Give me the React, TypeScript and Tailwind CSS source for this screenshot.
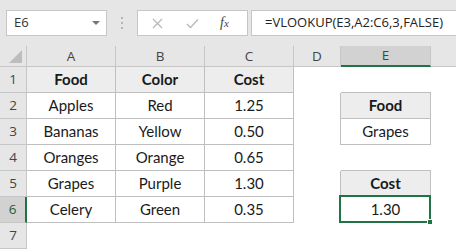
import React from 'react';

const cols = [
  { key: 'A', w: 'w-[89px]' },
  { key: 'B', w: 'w-[89px]' },
  { key: 'C', w: 'w-[89px]' },
  { key: 'D', w: 'w-[47px]' },
  { key: 'E', w: 'w-[90px]' },
];

const data = [
  ['Food', 'Color', 'Cost'],
  ['Apples', 'Red', '1.25'],
  ['Bananas', 'Yellow', '0.50'],
  ['Oranges', 'Orange', '0.65'],
  ['Grapes', 'Purple', '1.30'],
  ['Celery', 'Green', '0.35'],
];

const lookup: Record<number, { text: string; head?: boolean }> = {
  2: { text: 'Food', head: true },
  3: { text: 'Grapes' },
  5: { text: 'Cost', head: true },
  6: { text: '1.30' },
};

const cellFont = "font-['Lato','Liberation_Sans',sans-serif] text-[15px] text-[#1a1a1a]";
const uiFont = "font-['Open_Sans','Liberation_Sans',sans-serif]";

export default function App() {
  const rows = [1, 2, 3, 4, 5, 6, 7];

  return (
    <div className="w-[456px] h-[249px] overflow-hidden bg-white">
      {/* formula bar */}
      <div className="h-[46px] bg-[#e6e6e6] flex items-center pl-[6px]">
        <div className={`w-[101px] h-[26px] bg-white border border-[#c6c6c6] flex items-center justify-between pl-[7px] pr-[6px] ${uiFont} text-[13px] text-[#333]`}>
          <span>E6</span>
          <span className="w-0 h-0 border-l-[4px] border-r-[4px] border-t-[4px] border-l-transparent border-r-transparent border-t-[#777]" />
        </div>
        <div className="w-[30px] flex flex-col items-center gap-[3px]">
          <span className="w-[2px] h-[2px] bg-[#b5b5b5]" />
          <span className="w-[2px] h-[2px] bg-[#b5b5b5]" />
          <span className="w-[2px] h-[2px] bg-[#b5b5b5]" />
        </div>
        <div className="w-[111px] h-[26px] bg-white border border-[#c6c6c6] flex items-center pl-[12px]">
          <svg width="11" height="11" viewBox="0 0 11 11" className="ml-[2px]">
            <path d="M1 1L10 10M10 1L1 10" stroke="#b8b8b8" strokeWidth="1.3" />
          </svg>
          <svg width="13" height="11" viewBox="0 0 13 11" className="ml-[23px]">
            <path d="M1 6L4.5 9.5L12 1.5" stroke="#b8b8b8" strokeWidth="1.3" fill="none" />
          </svg>
          <span className="ml-[21px] font-['Liberation_Serif',serif] italic text-[14px] text-[#444] leading-none">
            f<span className="text-[11px]">x</span>
          </span>
        </div>
        <div className={`ml-[3px] flex-1 h-[26px] bg-white border border-[#c6c6c6] border-r-0 flex items-center pl-[13px] ${uiFont} text-[13px] text-[#222]`}>
          =VLOOKUP(E3,A2:C6,3,FALSE)
        </div>
      </div>

      {/* column headers */}
      <div className={`flex h-[21px] bg-[#e6e6e6] ${uiFont} text-[13.5px] text-[#444]`}>
        <div className="w-[27px] border-r border-b border-[#c6c6c6] relative">
          <svg width="13" height="13" viewBox="0 0 13 13" className="absolute right-[4px] bottom-[3px]">
            <path d="M13 0V13H0Z" fill="#bdbdbd" />
          </svg>
        </div>
        {cols.map((c) =>
          c.key === 'E' ? (
            <div key={c.key} className={`${c.w} border-r border-[#c6c6c6] border-b-2 border-b-[#217346] bg-[#d2d2d2] flex items-center justify-center text-[#1f5a38]`}>
              {c.key}
            </div>
          ) : (
            <div key={c.key} className={`${c.w} border-r border-b border-[#c6c6c6] flex items-center justify-center`}>
              {c.key}
            </div>
          )
        )}
        <div className="flex-1 border-b border-[#c6c6c6]" />
      </div>

      {/* rows */}
      {rows.map((r) => {
        const t = r <= 6 ? data[r - 1] : null;
        const e = lookup[r];
        const eTop = r === 1 || r === 4;
        return (
          <div key={r} className="flex h-[26px]">
            <div
              className={`w-[27px] ${
                r === 6
                  ? 'bg-[#d2d2d2] border-r-2 border-r-[#217346] text-[#1f5a38]'
                  : 'bg-[#e6e6e6] border-r border-r-[#c6c6c6] text-[#444]'
              } border-b border-b-[#c6c6c6] flex items-center justify-center ${uiFont} text-[13.5px]`}
            >
              {r}
            </div>
            {[0, 1, 2].map((i) => (
              <div
                key={i}
                className={`${cols[i].w} flex items-center justify-center ${cellFont} ${
                  t ? 'border-r border-b border-[#bfbfbf]' : ''
                } ${r === 1 ? 'bg-[#ededed] font-bold' : ''}`}
              >
                {t ? t[i] : ''}
              </div>
            ))}
            <div className={`w-[47px] ${e ? 'border-r border-[#bfbfbf]' : ''}`} />
            <div
              className={`w-[90px] relative flex items-center justify-center ${cellFont} ${
                e ? 'border-r border-b border-[#bfbfbf]' : eTop ? 'border-b border-[#bfbfbf]' : ''
              } ${e?.head ? 'bg-[#ededed] font-bold' : ''}`}
            >
              {e ? e.text : ''}
              {r === 6 && (
                <div className="absolute -left-[2px] -top-[2px] w-[92px] h-[28px] border-2 border-[#217346]">
                  <span className="absolute -right-[4px] -bottom-[4px] w-[6px] h-[6px] bg-[#217346] border border-white" />
                </div>
              )}
            </div>
            <div className="flex-1" />
          </div>
        );
      })}
    </div>
  );
}
